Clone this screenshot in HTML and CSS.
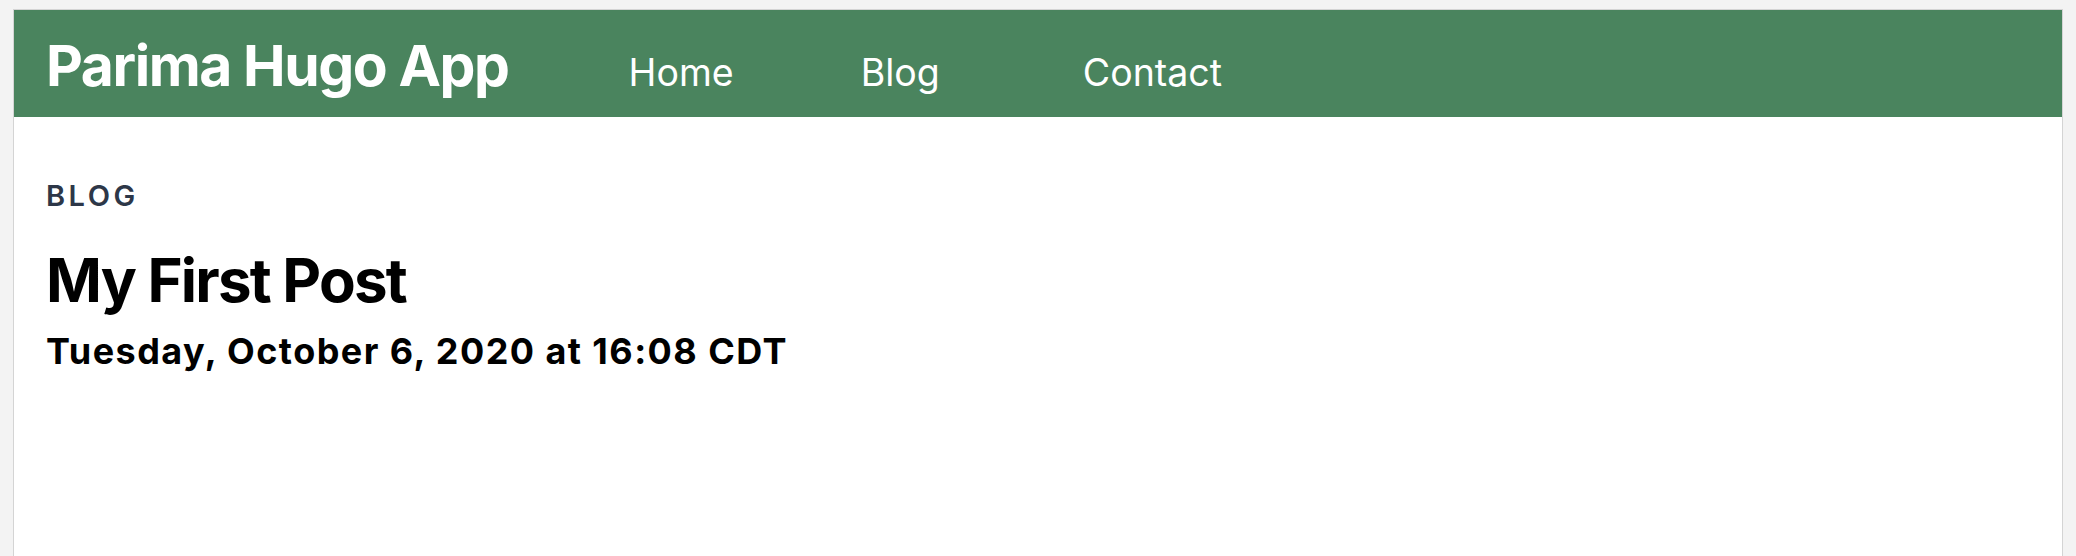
FILE: index.html
```html
<!DOCTYPE html>
<html lang="en">
<head>
<meta charset="utf-8">
<title>My First Post | Parima Hugo App</title>
<link rel="stylesheet" href="styles.css">
</head>
<body>
<div class="frame">
  <header class="site-header">
    <a class="brand" href="#">Parima Hugo App</a>
    <nav class="nav">
      <a class="nav-link" href="#">Home</a>
      <a class="nav-link" href="#">Blog</a>
      <a class="nav-link nav-link-last" href="#">Contact</a>
    </nav>
  </header>
  <main class="content">
    <div class="section-label">BLOG</div>
    <h1 class="post-title">My First Post</h1>
    <div class="post-date">Tuesday, October 6, 2020 at 16:08 CDT</div>
  </main>
</div>
</body>
</html>
```

FILE: styles.css
```css
html, body {
  margin: 0;
  padding: 0;
}
body {
  background: #f3f3f3;
  font-family: Inter, "Noto Sans", "Liberation Sans", sans-serif;
  overflow: hidden;
}
.frame {
  margin: 9px 13px 0 13px;
  border: 1px solid #d4d4d4;
  border-bottom: none;
  background: #ffffff;
  height: calc(100vh - 10px);
}
.site-header {
  display: flex;
  align-items: baseline;
  height: 107px;
  box-sizing: border-box;
  padding: 27px 33px 24px 32px;
  background: #4a845e;
}
.brand {
  color: #ffffff;
  text-decoration: none;
  font-size: 57px;
  font-weight: 700;
  line-height: 1;
  letter-spacing: -0.025em;
}
.nav {
  display: flex;
  align-items: baseline;
  margin-left: 120px;
  gap: 127px;
}
.nav-link {
  color: #ffffff;
  text-decoration: none;
  font-size: 37.5px;
  font-weight: 400;
  line-height: 1;
}
.nav-link-last {
  margin-left: 16px;
}
.content {
  padding: 64px 33px 0 32px;
}
.section-label {
  color: #2d3748;
  font-size: 29px;
  font-weight: 600;
  line-height: 1;
  letter-spacing: 0.12em;
}
.post-title {
  margin: 40px 0 0 0;
  color: #000000;
  font-size: 60px;
  font-weight: 700;
  line-height: 1;
  letter-spacing: -0.03em;
}
.post-date {
  margin-top: 23px;
  color: #000000;
  font-size: 36px;
  font-weight: 700;
  line-height: 1;
  letter-spacing: 0.04em;
}
```
